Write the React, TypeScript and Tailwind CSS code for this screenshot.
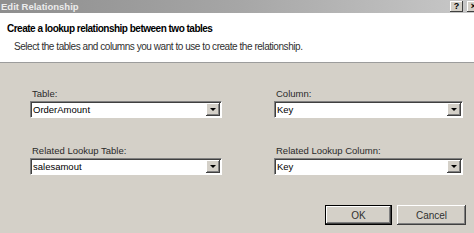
import React from 'react';

// ─── Classic Win32 controls ───────────────────────────────────────────────────

function ComboBox({ value }: { value: string }) {
  return (
    <div className="flex h-[17px] w-full border border-t-[#808080] border-l-[#808080] border-r-white border-b-white bg-white shadow-[inset_1px_1px_0_#404040]">
      <span className="flex-1 pl-[2px] pt-[1px] text-[9.5px] leading-[13px] text-black">{value}</span>
      <div className="m-[1px] flex w-[14px] items-center justify-center bg-[#d4d0c8] shadow-[inset_-1px_-1px_0_#404040,inset_1px_1px_0_#fff,inset_-2px_-2px_0_#808080]">
        <span className="h-0 w-0 border-x-[3px] border-t-[3px] border-x-transparent border-t-black" />
      </div>
    </div>
  );
}

function Field({ label, value }: { label: string; value: string }) {
  return (
    <div className="flex flex-col">
      <span className="pl-[2px] text-[9.5px] leading-[11px] text-[#2a2a2a]">{label}</span>
      <div className="mt-[2px]">
        <ComboBox value={value} />
      </div>
    </div>
  );
}

function TitleButton({ children }: { children: React.ReactNode }) {
  return (
    <div className="flex h-[11px] w-[13px] shrink-0 items-center justify-center bg-[#d4d0c8] text-[9px] font-bold leading-none text-black shadow-[inset_-1px_-1px_0_#404040,inset_1px_1px_0_#fff]">
      {children}
    </div>
  );
}

export default function App() {
  return (
    <div
      className="flex h-[233px] w-[474px] flex-col overflow-hidden bg-[#d4d0c8]"
      style={{ fontFamily: '"Liberation Sans", Arial, sans-serif' }}
    >
      {/* ── Title bar ─────────────────────────────────────────────────── */}
      <div className="flex h-[13px] items-center justify-between overflow-hidden bg-gradient-to-r from-[#8e8e8e] via-[#a6a6a6] to-[#c8c8c8] pl-[1px]">
        <span className="text-[9.5px] font-bold leading-none text-[#ececec]">Edit Relationship</span>
        <div className="mr-[-6px] flex gap-[4px]">
          <TitleButton>?</TitleButton>
          <TitleButton>×</TitleButton>
        </div>
      </div>

      {/* ── Header ────────────────────────────────────────────────────── */}
      <div className="h-[50px] border-b border-[#9c9c9c] bg-white pl-[7px] pt-[10px]">
        <h1 className="text-[10px] font-bold leading-[12px] tracking-[-0.5px] text-black">
          Create a lookup relationship between two tables
        </h1>
        <p className="mt-[6px] pl-[7px] text-[10px] leading-[12px] tracking-[-0.45px] text-[#303030]">
          Select the tables and columns you want to use to create the relationship.
        </p>
      </div>

      {/* ── Body ──────────────────────────────────────────────────────── */}
      <div className="flex flex-1 flex-col pl-[30px] pr-[8px] pt-[25px]">
        <div className="grid grid-cols-[192px_189px] gap-x-[52px] gap-y-[27px]">
          <Field label="Table:" value="OrderAmount" />
          <Field label="Column:" value="Key" />
          <Field label="Related Lookup Table:" value="salesamout" />
          <Field label="Related Lookup Column:" value="Key" />
        </div>

        <div className="mt-[30px] flex justify-end gap-[5px]">
          <button className="h-[20px] w-[67px] border border-black bg-[#d4d0c8] text-[10px] text-[#303030] shadow-[inset_-1px_-1px_0_#404040,inset_1px_1px_0_#fff,inset_-2px_-2px_0_#808080]">
            OK
          </button>
          <button className="h-[20px] w-[69px] bg-[#d4d0c8] text-[10px] text-[#303030] shadow-[inset_-1px_-1px_0_#404040,inset_1px_1px_0_#fff,inset_-2px_-2px_0_#808080]">
            Cancel
          </button>
        </div>
      </div>
    </div>
  );
}
